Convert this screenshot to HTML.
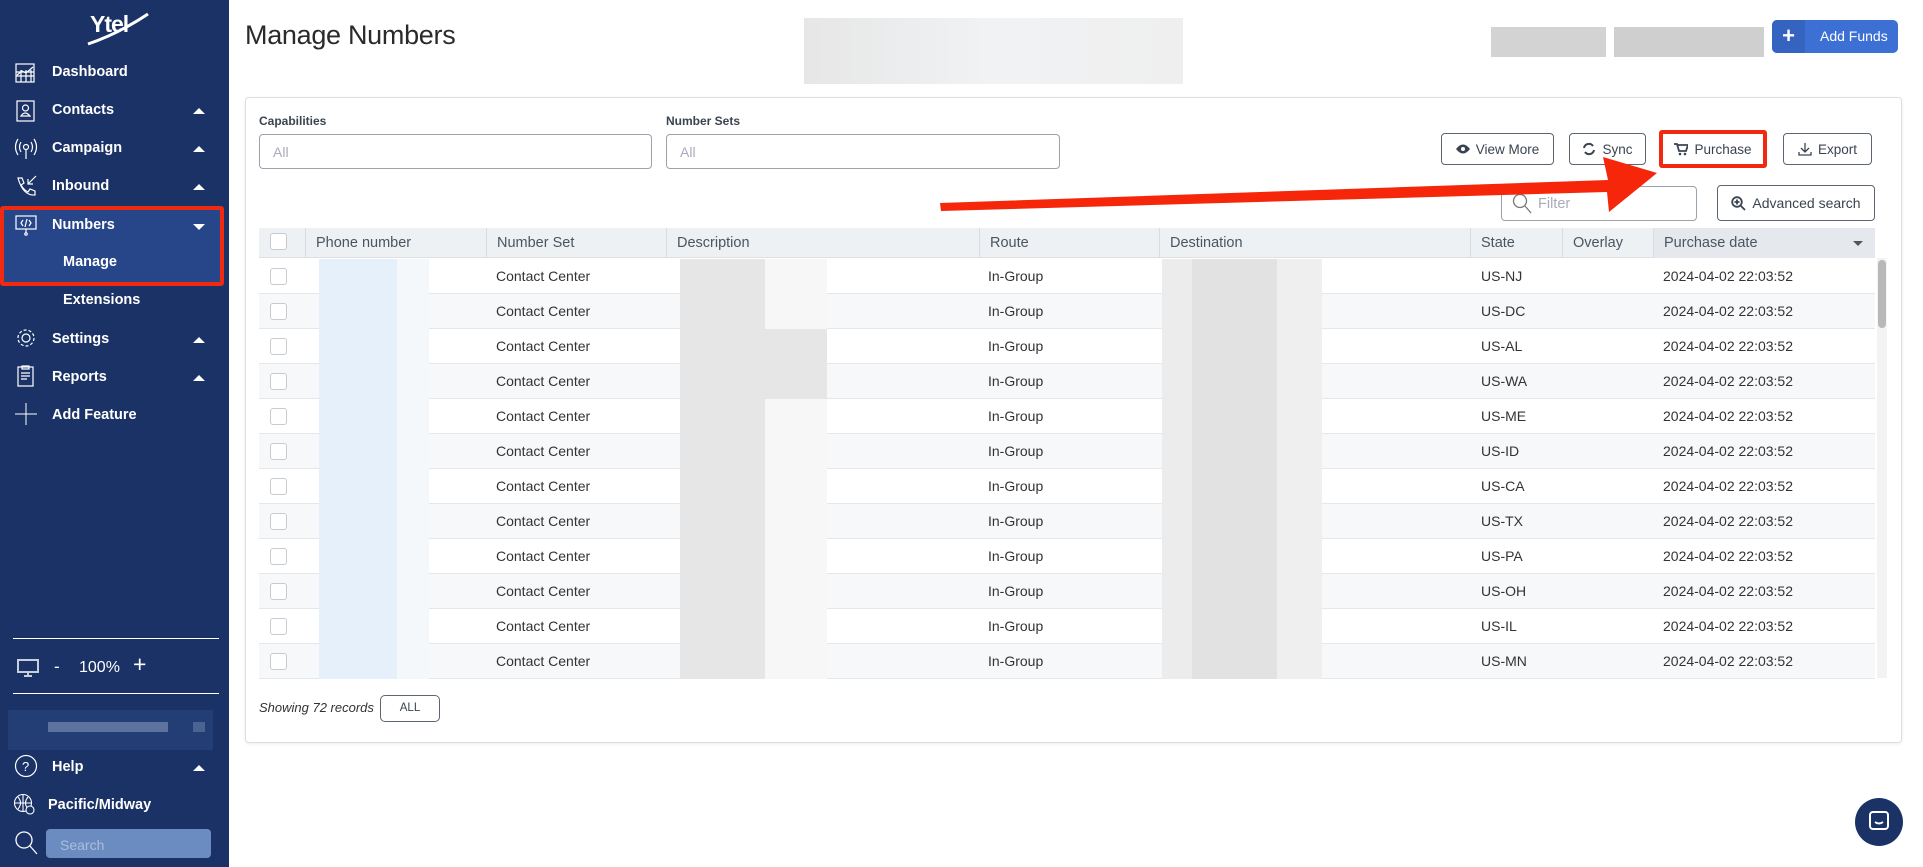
<!DOCTYPE html>
<html><head><meta charset="utf-8"><style>
*{box-sizing:border-box;margin:0;padding:0}
body{width:1923px;height:867px;overflow:hidden;background:#fff;font-family:"Liberation Sans",sans-serif;position:relative;color:#333}
.abs{position:absolute}
#sb{left:0;top:0;width:229px;height:867px;background:#1b3266;color:#fff}
.mi{position:absolute;left:52px;font-size:14.5px;font-weight:bold;color:#fff}
.ic{position:absolute;left:14px;width:24px;height:22px}
.car{position:absolute;left:193px;width:0;height:0;border-left:6px solid transparent;border-right:6px solid transparent}
.up{border-bottom:6px solid #fff}
.dn{border-top:6px solid #fff}
.btn{position:absolute;border:1px solid #5b6670;border-radius:4px;background:#fff;font-size:13.5px;color:#3a4450;display:flex;align-items:center;justify-content:center;gap:6px}
.th{position:absolute;top:228px;height:30px;line-height:30px;font-size:14.5px;color:#4a5560;padding-left:10px;border-left:1px solid #d9dde2}
.row{position:absolute;left:259px;width:1616px;height:35px;border-bottom:1px solid #e4e7eb}
.cell{position:absolute;top:0;line-height:35px;font-size:14px;color:#333}
.cb{position:absolute;left:11px;top:9px;width:17px;height:17px;border:1px solid #c6cbd1;border-radius:3px;background:#fff}
</style></head><body>

<div id="sb" class="abs">
  <div class="abs" style="left:82px;top:4px;width:70px;height:42px">
    <svg width="70" height="42" viewBox="0 0 70 42"><path d="M6 40 Q36 30 66 10" stroke="#fff" stroke-width="3" fill="none"/><text x="8" y="28" font-family="Liberation Sans" font-weight="bold" font-size="23" fill="#fff" letter-spacing="-1">Ytel</text></svg>
  </div>
  <svg class="ic" style="top:62px" viewBox="0 0 24 22" fill="none" stroke="#fff" stroke-width="1.2"><rect x="2" y="2" width="18" height="18"/><path d="M2 14h18M2 10h18M7 8v12M12 8v12M17 8v12M3 13l5-4 4 2 7-6"/></svg>
  <div class="mi" style="top:64px">Dashboard</div>
  <svg class="ic" style="top:100px" viewBox="0 0 24 22" fill="none" stroke="#fff" stroke-width="1.2"><rect x="3" y="1" width="17" height="20"/><circle cx="11.5" cy="8" r="3"/><path d="M7 16q4-6 9 0z"/></svg>
  <div class="mi" style="top:102px">Contacts</div><div class="car up" style="top:108px"></div>
  <svg class="ic" style="top:138px" viewBox="0 0 24 22" fill="none" stroke="#fff" stroke-width="1.2"><circle cx="12" cy="9" r="2.5"/><path d="M12 12v9M7 4q-3 5 0 10M17 4q3 5 0 10M4 1q-5 8 0 16M20 1q5 8 0 16"/></svg>
  <div class="mi" style="top:140px">Campaign</div><div class="car up" style="top:146px"></div>
  <svg class="ic" style="top:175px" viewBox="0 0 24 22" fill="none" stroke="#fff" stroke-width="1.2"><path d="M4 3l4 0 2 5-3 2q3 5 7 7l2-3 5 2v4q-12 1-17-17zM22 1l-8 8M14 4v5h5"/></svg>
  <div class="mi" style="top:178px">Inbound</div><div class="car up" style="top:184px"></div>
  <div class="abs" style="left:0;top:206px;width:224px;height:80px;background:#27468a;border:4px solid #f02a10;border-radius:3px"></div>
  <svg class="ic" style="top:214px" viewBox="0 0 24 22" fill="none" stroke="#fff" stroke-width="1.2"><rect x="2" y="2" width="20" height="13"/><path d="M9 6l-2 3 2 3M15 6l2 3-2 3M13 5l-2 8M12 15v4"/><circle cx="12" cy="20" r="1.2"/></svg>
  <div class="mi" style="top:217px">Numbers</div><div class="car dn" style="top:224px"></div>
  <div class="mi" style="left:63px;top:254px">Manage</div>
  <div class="mi" style="left:63px;top:292px">Extensions</div>
  <svg class="ic" style="top:327px" viewBox="0 0 24 22" fill="none" stroke="#fff" stroke-width="1.2"><circle cx="12" cy="11" r="4"/><circle cx="12" cy="11" r="8" stroke-dasharray="3 2"/></svg>
  <div class="mi" style="top:331px">Settings</div><div class="car up" style="top:337px"></div>
  <svg class="ic" style="top:365px" viewBox="0 0 24 22" fill="none" stroke="#fff" stroke-width="1.2"><rect x="4" y="2" width="15" height="19"/><rect x="8" y="1" width="7" height="3"/><path d="M7 8h9M7 11h9M7 14h6"/></svg>
  <div class="mi" style="top:369px">Reports</div><div class="car up" style="top:375px"></div>
  <svg class="ic" style="top:403px" viewBox="0 0 24 22" fill="none" stroke="#fff" stroke-width="1"><path d="M12 0v22M1 11h22"/></svg>
  <div class="mi" style="top:407px">Add Feature</div>
  <div class="abs" style="left:13px;top:638px;width:206px;height:1px;background:#fff"></div>
  <svg class="abs" style="left:17px;top:659px" width="22" height="18" viewBox="0 0 22 18" fill="none" stroke="#c8cfdc" stroke-width="2"><rect x="1" y="1" width="20" height="12"/><path d="M7 17h8M11 13v4"/></svg>
  <div class="abs" style="left:54px;top:657px;font-size:17px;color:#fff">-</div>
  <div class="abs" style="left:79px;top:659px;font-size:16px;color:#fff">100%</div>
  <div class="abs" style="left:133px;top:651px;font-size:23px;color:#fff">+</div>
  <div class="abs" style="left:13px;top:693px;width:206px;height:1px;background:#fff"></div>
  <div class="abs" style="left:8px;top:710px;width:205px;height:40px;background:#233d75"></div>
  <div class="abs" style="left:48px;top:722px;width:120px;height:10px;background:#5d739e"></div>
  <div class="abs" style="left:193px;top:722px;width:12px;height:10px;background:#4a6393"></div>
  <svg class="abs" style="left:14px;top:754px" width="24" height="24" viewBox="0 0 24 24" fill="none" stroke="#fff" stroke-width="1.2"><circle cx="12" cy="12" r="10.5"/><text x="8" y="17" font-size="13" fill="#fff" stroke="none" font-family="Liberation Sans">?</text></svg>
  <div class="mi" style="top:759px">Help</div><div class="car up" style="top:765px"></div>
  <svg class="abs" style="left:13px;top:793px" width="22" height="22" viewBox="0 0 22 22" fill="none" stroke="#fff" stroke-width="1.1"><circle cx="10" cy="10" r="8.5"/><path d="M2 10h17M10 1.5v17M5 4q5 6 0 12M15 4q-5 6 0 12"/><circle cx="17" cy="17" r="4" fill="#1b3266"/></svg>
  <div class="mi" style="left:48px;top:797px">Pacific/Midway</div>
  <svg class="abs" style="left:14px;top:830px" width="24" height="26" viewBox="0 0 24 26" fill="none" stroke="#fff" stroke-width="1.3"><circle cx="10" cy="10" r="8"/><path d="M16 16l7 8"/></svg>
  <div class="abs" style="left:46px;top:829px;width:165px;height:29px;background:#6a8cc0;border-radius:4px;font-size:14px;color:#aebed8;padding:8px 14px">Search</div>
</div>

<div class="abs" style="left:245px;top:20px;font-size:27px;color:#2a2a2a;letter-spacing:-0.3px">Manage Numbers</div>
<div class="abs" style="left:804px;top:18px;width:379px;height:66px;background:linear-gradient(90deg,#e2e2e2,#eef0f2 50%,#ececec);opacity:.85"></div>
<div class="abs" style="left:1491px;top:27px;width:115px;height:30px;background:#d3d3d3"></div>
<div class="abs" style="left:1614px;top:27px;width:150px;height:30px;background:#cfcfcf"></div>
<div class="abs" style="left:1772px;top:20px;width:126px;height:33px;background:#3c70d4;border-radius:5px;color:#fff;font-size:14px">
  <div class="abs" style="left:0;top:0;width:33px;height:33px;background:#3564c0;border-radius:5px 0 0 5px;font-size:22px;font-weight:bold;text-align:center;line-height:32px">+</div>
  <div class="abs" style="left:48px;top:8px">Add Funds</div>
</div>

<div class="abs" style="left:245px;top:97px;width:1657px;height:646px;border:1px solid #dcdfe3;border-radius:4px;box-shadow:0 1px 3px rgba(0,0,0,.08)"></div>
<div class="abs" style="left:259px;top:114px;font-size:12px;font-weight:bold;color:#3a4450">Capabilities</div>
<div class="abs" style="left:666px;top:114px;font-size:12px;font-weight:bold;color:#3a4450">Number Sets</div>
<div class="abs" style="left:259px;top:134px;width:393px;height:35px;border:1px solid #9aa2ab;border-radius:4px;font-size:14px;color:#aab;padding:9px 13px">All</div>
<div class="abs" style="left:666px;top:134px;width:394px;height:35px;border:1px solid #9aa2ab;border-radius:4px;font-size:14px;color:#aab;padding:9px 13px">All</div>

<div class="btn" style="left:1441px;top:133px;width:113px;height:32px"><svg width="14" height="10" viewBox="0 0 14 10"><path d="M0 5q7-9 14 0q-7 9-14 0z" fill="#3a4450"/><circle cx="7" cy="5" r="2" fill="#fff"/></svg>View More</div>
<div class="btn" style="left:1569px;top:133px;width:77px;height:32px"><svg width="14" height="14" viewBox="0 0 14 14" fill="none" stroke="#3a4450" stroke-width="2"><path d="M2 6a5 5 0 0 1 9-2M12 8a5 5 0 0 1-9 2"/></svg>Sync</div>
<div class="abs" style="left:1659px;top:130px;width:108px;height:38px;border:4px solid #f02a10;border-radius:3px;background:#fff"></div>
<div class="abs" style="left:1666px;top:134px;width:94px;height:30px;font-size:13.5px;color:#3a4450;display:flex;align-items:center;justify-content:center;gap:6px"><svg width="14" height="13" viewBox="0 0 14 13"><path d="M0 1h3l2 7h7l2-6H4" fill="none" stroke="#3a4450" stroke-width="1.8"/><circle cx="6" cy="11" r="1.3" fill="#3a4450"/><circle cx="11" cy="11" r="1.3" fill="#3a4450"/></svg>Purchase</div>
<div class="btn" style="left:1783px;top:133px;width:89px;height:32px"><svg width="14" height="14" viewBox="0 0 14 14" fill="none" stroke="#3a4450" stroke-width="1.3"><path d="M7 1v9M3 6l4 4 4-4M1 10v3h12v-3"/></svg>Export</div>
<div class="abs" style="left:1501px;top:186px;width:196px;height:35px;border:1px solid #9aa2ab;border-radius:4px;font-size:14.5px;color:#aab;padding:9px 0 0 36px">Filter<svg class="abs" style="left:10px;top:6px" width="20" height="22" viewBox="0 0 20 22" fill="none" stroke="#777" stroke-width="1.3"><circle cx="8" cy="8" r="6.5"/><path d="M13 13l6 7"/></svg></div>
<div class="btn" style="left:1717px;top:185px;width:158px;height:36px;font-size:14px"><svg width="15" height="15" viewBox="0 0 15 15" fill="none" stroke="#3a4450" stroke-width="1.8"><circle cx="6" cy="6" r="4.8"/><path d="M10 10l4 4M6 3.5v5M3.5 6h5"/></svg>Advanced search</div>

<div class="abs" style="left:259px;top:228px;width:1616px;height:30px;background:#eef1f4;border-bottom:1px solid #dde1e5"></div>
<div class="cb" style="left:270px;top:233px;position:absolute"></div>
<div class="th" style="left:305px">Phone number</div>
<div class="th" style="left:486px">Number Set</div>
<div class="th" style="left:666px">Description</div>
<div class="th" style="left:979px">Route</div>
<div class="th" style="left:1159px">Destination</div>
<div class="th" style="left:1470px">State</div>
<div class="th" style="left:1562px">Overlay</div>
<div class="th" style="left:1653px;width:222px;background:#e5e9ed">Purchase date</div>
<div class="abs" style="left:1853px;top:241px;border-left:5px solid transparent;border-right:5px solid transparent;border-top:5px solid #555"></div>

<div id="rows"></div>
<script>
var st=["NJ","DC","AL","WA","ME","ID","CA","TX","PA","OH","IL","MN"],h="";
for(var i=0;i<12;i++){var t=259+i*35;
h+='<div class="row" style="top:'+t+'px;background:'+(i%2?'#f7f8fa':'#fff')+'"><div class="cb"></div>'+
'<div class="abs" style="left:60px;top:0;width:78px;height:35px;background:#e6f0fb"></div>'+
'<div class="abs" style="left:138px;top:0;width:32px;height:35px;background:#f5f8fb"></div>'+
'<div class="cell" style="left:237px">Contact Center</div>'+
'<div class="abs" style="left:421px;top:0;width:85px;height:35px;background:#e6e6e6"></div>'+
'<div class="abs" style="left:506px;top:0;width:62px;height:35px;background:'+(i==2||i==3?'#e6e6e6':'#f7f7f7')+'"></div>'+
'<div class="cell" style="left:729px">In-Group</div>'+
'<div class="abs" style="left:903px;top:0;width:30px;height:35px;background:#ececec"></div>'+
'<div class="abs" style="left:933px;top:0;width:85px;height:35px;background:#e2e2e2"></div>'+
'<div class="abs" style="left:1018px;top:0;width:45px;height:35px;background:#efefef"></div>'+
'<div class="cell" style="left:1222px">US-'+st[i]+'</div>'+
'<div class="cell" style="left:1404px">2024-04-02 22:03:52</div></div>';}
document.getElementById("rows").innerHTML=h;
</script>
<div class="abs" style="left:1877px;top:258px;width:10px;height:420px;background:#f3f3f3"></div>
<div class="abs" style="left:1878px;top:260px;width:8px;height:68px;background:#b8b8b8;border-radius:4px"></div>

<div class="abs" style="left:259px;top:700px;font-size:13px;font-style:italic;color:#333">Showing 72 records</div>
<div class="abs" style="left:380px;top:695px;width:60px;height:27px;border:1px solid #5b6670;border-radius:5px;font-size:11.5px;text-align:center;line-height:25px;color:#3a4450">ALL</div>

<svg class="abs" style="left:0;top:0" width="1923" height="867"><polygon points="940,203 1608,180 1603,157 1657,173 1609,212 1607,192 941,211" fill="#f5260a"/></svg>

<div class="abs" style="left:1855px;top:798px;width:48px;height:48px;border-radius:50%;background:#1b3266">
<svg class="abs" style="left:14px;top:13px" width="20" height="22" viewBox="0 0 20 22" fill="none" stroke="#fff" stroke-width="2"><rect x="1" y="1" width="18" height="17" rx="3"/><path d="M6 11q4 3 8 0"/></svg></div>
</body></html>
